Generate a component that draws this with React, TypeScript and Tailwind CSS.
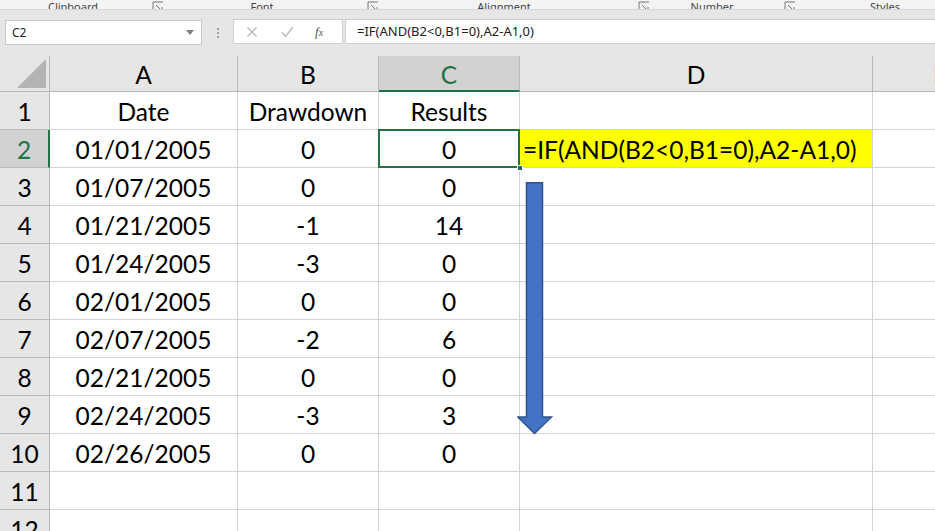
import React from "react";

const cellFont = { fontFamily: "Lato, 'Noto Sans', sans-serif" };

function Launcher() {
  return (
    <svg width="12" height="12" viewBox="0 0 12 12" className="shrink-0">
      <path d="M1 1 H11 M1 1 V11" stroke="#777" strokeWidth="1" fill="none" />
      <path d="M4 4 L10 10 M10 6 V10 H6" stroke="#777" strokeWidth="1" fill="none" />
    </svg>
  );
}

const groups = [
  { label: "Clipboard", w: "w-[146px]", ml: "ml-[6px]", total: "w-[167px]" },
  { label: "Font", w: "w-[190px]", ml: "ml-[10px]", total: "w-[216px]" },
  { label: "Alignment", w: "w-[242px]", ml: "ml-[13px]", total: "w-[272px]" },
  { label: "Number", w: "w-[114px]", ml: "ml-[15px]", total: "w-[145px]" },
];

const rows: [string, string, string][] = [
  ["Date", "Drawdown", "Results"],
  ["01/01/2005", "0", "0"],
  ["01/07/2005", "0", "0"],
  ["01/21/2005", "-1", "14"],
  ["01/24/2005", "-3", "0"],
  ["02/01/2005", "0", "0"],
  ["02/07/2005", "-2", "6"],
  ["02/21/2005", "0", "0"],
  ["02/24/2005", "-3", "3"],
  ["02/26/2005", "0", "0"],
  ["", "", ""],
  ["", "", ""],
];

export default function App() {
  return (
    <div className="w-[935px] h-[531px] overflow-hidden bg-white relative" style={{ fontFamily: "'Noto Sans', 'Open Sans', sans-serif" }}>
      {/* ribbon group labels strip */}
      <div className="h-[10px] bg-[#f3f3f3] border-b border-[#d6d6d6] flex overflow-hidden text-[11px] text-[#444]">
        {groups.map((g) => (
          <div key={g.label} className={`${g.total} flex items-end shrink-0`}>
            <span className={`${g.w} text-center leading-[13px] -mb-[4px] shrink-0`}>{g.label}</span>
            <span className={`${g.ml} -mb-[4px]`}>
              <Launcher />
            </span>
          </div>
        ))}
        <div className="w-[170px] flex items-end shrink-0">
          <span className="w-[170px] text-center leading-[13px] -mb-[4px]">Styles</span>
        </div>
      </div>

      {/* formula bar */}
      <div className="h-[46px] bg-[#e6e6e6] flex items-start pt-[10px]">
        <div className="ml-[5px] w-[197px] h-[25px] bg-white border border-[#c6c6c6] flex items-center justify-between pl-[6px] pr-[7px] text-[12px] text-[#222]">
          <span>C2</span>
          <svg width="8" height="5" viewBox="0 0 8 5">
            <path d="M0 0 H8 L4 5 Z" fill="#808080" />
          </svg>
        </div>
        <div className="w-[31px] h-[25px] flex flex-col items-center justify-center gap-[2px]">
          <span className="w-[2px] h-[2px] bg-[#9e9e9e]" />
          <span className="w-[2px] h-[2px] bg-[#9e9e9e]" />
          <span className="w-[2px] h-[2px] bg-[#9e9e9e]" />
        </div>
        <div className="w-[110px] h-[25px] -mt-[1px] bg-white border border-[#d0d0d0] flex items-center">
          <svg width="12" height="12" viewBox="0 0 12 12" className="ml-[12px]">
            <path d="M1.5 1.5 L10.5 10.5 M10.5 1.5 L1.5 10.5" stroke="#b8b8b8" strokeWidth="1.3" />
          </svg>
          <svg width="13" height="12" viewBox="0 0 13 12" className="ml-[23px]">
            <path d="M1 6.5 L4.5 10.5 L12 1" stroke="#b8b8b8" strokeWidth="1.4" fill="none" />
          </svg>
          <span className="ml-[21px] text-[13px] italic text-[#555]" style={{ fontFamily: "'Liberation Serif', serif" }}>
            f<span className="text-[10px]">x</span>
          </span>
        </div>
        <div className="ml-[2px] flex-1 h-[25px] -mt-[1px] bg-white border border-[#d0d0d0] border-r-0 flex items-center pl-[11px] text-[13px] text-[#222]">
          =IF(AND(B2&lt;0,B1=0),A2-A1,0)
        </div>
      </div>

      {/* grid */}
      <div className="grid grid-cols-[50px_188px_141px_141px_353px_1fr] text-[24.5px] text-black" style={cellFont}>
        {/* header row */}
        <div className="h-[36px] bg-[#e6e6e6] border-r border-b border-[#b9b9b9] flex items-end justify-end pr-[3px] pb-[3px]">
          <svg width="29" height="29" viewBox="0 0 29 29">
            <path d="M29 0 V29 H0 Z" fill="#b4b4b4" />
          </svg>
        </div>
        {["A", "B", "C", "D", "E"].map((c) =>
          c === "C" ? (
            <div key={c} className="h-[36px] pt-[4px] bg-[#d2d2d2] border-r border-[#b9b9b9] border-b-2 border-b-[#217346] flex items-center justify-center text-[#217346]">
              {c}
            </div>
          ) : c === "E" ? (
            <div key={c} className="h-[36px] pt-[4px] bg-[#e6e6e6] border-b border-[#b9b9b9] flex items-center pl-[60px]">
              {c}
            </div>
          ) : (
            <div key={c} className="h-[36px] pt-[4px] bg-[#e6e6e6] border-r border-b border-[#b9b9b9] flex items-center justify-center">
              {c}
            </div>
          )
        )}

        {rows.map((r, i) => {
          const n = i + 1;
          const sel = n === 2;
          return (
            <React.Fragment key={n}>
              <div
                className={
                  sel
                    ? "h-[38px] pt-[4px] bg-[#d2d2d2] border-b border-[#b9b9b9] border-r-2 border-r-[#217346] flex items-center justify-center text-[#217346]"
                    : "h-[38px] pt-[4px] bg-[#e6e6e6] border-r border-b border-[#b9b9b9] flex items-center justify-center"
                }
              >
                {n}
              </div>
              <div className="h-[38px] pt-[4px] border-r border-b border-[#d4d4d4] flex items-center justify-center">{r[0]}</div>
              <div className="h-[38px] pt-[4px] border-r border-b border-[#d4d4d4] flex items-center justify-center">{r[1]}</div>
              <div className="h-[38px] pt-[4px] border-r border-b border-[#d4d4d4] flex items-center justify-center relative">
                {r[2]}
                {sel && (
                  <>
                    <div className="absolute -left-[1px] -top-[1px] w-[142px] h-[39px] border-2 border-[#217346]" />
                    <div className="absolute -right-[4px] -bottom-[4px] w-[6px] h-[6px] bg-[#217346] border border-white z-10" />
                  </>
                )}
              </div>
              <div
                className={
                  sel
                    ? "h-[38px] pt-[4px] border-r border-b border-[#d4d4d4] bg-[#ffff00] flex items-center pl-[3px] whitespace-nowrap"
                    : "h-[38px] border-r border-b border-[#d4d4d4]"
                }
              >
                {sel ? "=IF(AND(B2<0,B1=0),A2-A1,0)" : ""}
              </div>
              <div className="h-[38px] border-b border-[#d4d4d4]" />
            </React.Fragment>
          );
        })}
      </div>

      {/* arrow shape */}
      <svg className="absolute left-[517px] top-[182px]" width="36" height="254" viewBox="0 0 36 254">
        <path
          d="M9.5 0.75 H25.5 V235 H34.5 L17.5 251.5 L0.75 235 H9.5 Z"
          fill="#4472c4"
          stroke="#2f528f"
          strokeWidth="1.5"
          strokeLinejoin="miter"
        />
      </svg>
    </div>
  );
}
